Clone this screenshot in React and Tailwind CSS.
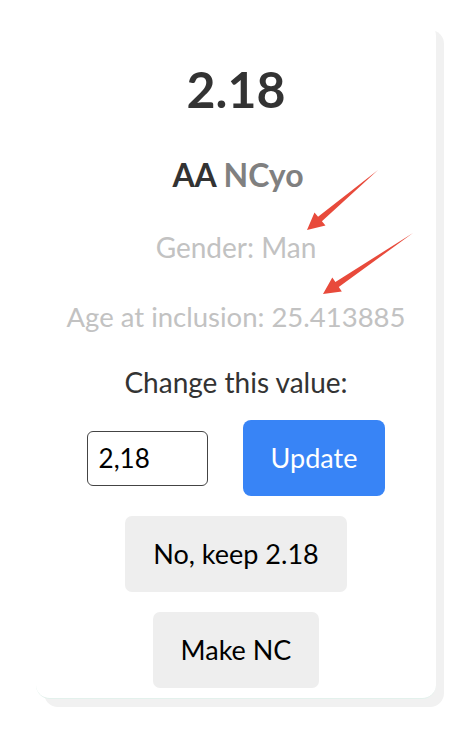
import React from 'react';

function Arrow({ from, to }) {
  const [x1, y1] = from;
  const [x2, y2] = to;
  const len = Math.hypot(x2 - x1, y2 - y1);
  const dx = (x2 - x1) / len;
  const dy = (y2 - y1) / len;
  const nx = -dy;
  const ny = dx;
  const bx = x2 - dx * 17;
  const by = y2 - dy * 17;
  const pts = [
    [x1, y1],
    [bx + nx * 3, by + ny * 3],
    [bx + nx * 8.5, by + ny * 8.5],
    [x2, y2],
    [bx - nx * 8.5, by - ny * 8.5],
    [bx - nx * 3, by - ny * 3],
  ]
    .map((p) => p.join(','))
    .join(' ');
  return <polygon points={pts} fill="#e84a3b" />;
}

export default function App() {
  return (
    <div className="relative w-[466px] h-[730px] bg-white font-['Lato','Liberation_Sans',sans-serif]">
      <div className="ml-[36px] pt-[22px]">
        <div className="w-[400px] rounded-[14px] bg-white border-b border-[#e3f1ec] shadow-[8px_8px_0_0_#f1f1f1] flex flex-col items-center pb-[10px]">
          <div className="mt-[42px] text-[50px] leading-none font-bold text-[#333]">2.18</div>
          <div className="mt-[45px] ml-[4px] text-[32px] leading-[32px] font-bold">
            <span className="text-[#333]">AA</span> <span className="text-[#808080]">NCyo</span>
          </div>
          <div className="mt-[42px] text-[28px] leading-[28px] text-[#c2c2c2]">Gender: Man</div>
          <div className="mt-[42px] text-[27.5px] leading-[28px] text-[#c2c2c2]">Age at inclusion: 25.413885</div>
          <div className="mt-[37px] text-[28px] leading-[28px] text-[#333]">Change this value:</div>
          <div className="mt-[24px] flex items-center gap-[35px]">
            <input
              defaultValue="2,18"
              className="w-[121px] h-[55px] border-[1.5px] border-[#444] rounded-[6px] px-[11px] text-[26px] text-black outline-none"
            />
            <button className="h-[76px] px-[28px] rounded-[8px] bg-[#3884f6] text-white text-[27px]">Update</button>
          </div>
          <button className="mt-[20px] h-[76px] px-[28px] rounded-[7px] bg-[#eeeeee] text-black text-[27px]">
            No, keep 2.18
          </button>
          <button className="mt-[20px] h-[76px] px-[28px] rounded-[7px] bg-[#eeeeee] text-black text-[27px]">
            Make NC
          </button>
        </div>
      </div>
      <svg className="absolute left-0 top-0 pointer-events-none" width="466" height="730">
        <Arrow from={[378, 170]} to={[307, 230]} />
        <Arrow from={[413, 233]} to={[323, 294]} />
      </svg>
    </div>
  );
}
